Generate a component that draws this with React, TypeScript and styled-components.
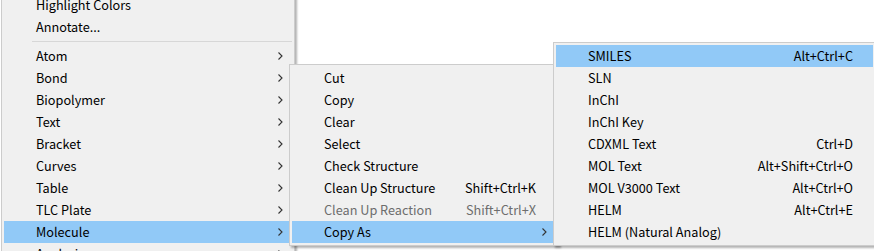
import React from 'react';
import styled, { createGlobalStyle } from 'styled-components';

type Entry =
  | { kind: 'sep' }
  | { kind: 'item'; label: string; shortcut?: string; sub?: boolean; active?: boolean; disabled?: boolean };

const mainItems: Entry[] = [
  { kind: 'item', label: 'Highlight Colors' },
  { kind: 'item', label: 'Annotate...' },
  { kind: 'sep' },
  { kind: 'item', label: 'Atom', sub: true },
  { kind: 'item', label: 'Bond', sub: true },
  { kind: 'item', label: 'Biopolymer', sub: true },
  { kind: 'item', label: 'Text', sub: true },
  { kind: 'item', label: 'Bracket', sub: true },
  { kind: 'item', label: 'Curves', sub: true },
  { kind: 'item', label: 'Table', sub: true },
  { kind: 'item', label: 'TLC Plate', sub: true },
  { kind: 'item', label: 'Molecule', sub: true, active: true },
  { kind: 'item', label: 'Analysis', sub: true },
];

const moleculeItems: Entry[] = [
  { kind: 'item', label: 'Cut' },
  { kind: 'item', label: 'Copy' },
  { kind: 'item', label: 'Clear' },
  { kind: 'item', label: 'Select' },
  { kind: 'item', label: 'Check Structure' },
  { kind: 'item', label: 'Clean Up Structure', shortcut: 'Shift+Ctrl+K' },
  { kind: 'item', label: 'Clean Up Reaction', shortcut: 'Shift+Ctrl+X', disabled: true },
  { kind: 'item', label: 'Copy As', sub: true, active: true },
];

const copyAsItems: Entry[] = [
  { kind: 'item', label: 'SMILES', shortcut: 'Alt+Ctrl+C', active: true },
  { kind: 'item', label: 'SLN' },
  { kind: 'item', label: 'InChI' },
  { kind: 'item', label: 'InChI Key' },
  { kind: 'item', label: 'CDXML Text', shortcut: 'Ctrl+D' },
  { kind: 'item', label: 'MOL Text', shortcut: 'Alt+Shift+Ctrl+O' },
  { kind: 'item', label: 'MOL V3000 Text', shortcut: 'Alt+Ctrl+O' },
  { kind: 'item', label: 'HELM', shortcut: 'Alt+Ctrl+E' },
  { kind: 'item', label: 'HELM (Natural Analog)' },
];

const Chevron = () => (
  <svg width="5" height="8" viewBox="0 0 5 8">
    <polyline points="0.5,0.5 4,4 0.5,7.5" fill="none" stroke="#333" strokeWidth="1.1" />
  </svg>
);

const MenuList: React.FC<{ items: Entry[] }> = ({ items }) => (
  <>
    {items.map((it, i) =>
      it.kind === 'sep' ? (
        <Separator key={i} />
      ) : (
        <Item key={i} $active={it.active} $disabled={it.disabled}>
          <Label>{it.label}</Label>
          {it.shortcut && <Shortcut>{it.shortcut}</Shortcut>}
          <ArrowSlot>{it.sub && <Chevron />}</ArrowSlot>
        </Item>
      )
    )}
  </>
);

const App: React.FC = () => (
  <>
    <GlobalStyle />
    <Desk>
      <Menu $left={1} $top={-9} $width={294}>
        <MenuList items={mainItems} />
      </Menu>
      <Menu $left={289} $top={64} $width={270}>
        <MenuList items={moleculeItems} />
      </Menu>
      <Menu $left={553} $top={42} $width={323}>
        <MenuList items={copyAsItems} />
      </Menu>
    </Desk>
  </>
);

export default App;

const GlobalStyle = createGlobalStyle`
  html, body {
    margin: 0;
    padding: 0;
    background: #ffffff;
    overflow: hidden;
  }
  body {
    font-family: "Noto Sans CJK SC", "Noto Sans", sans-serif;
    font-size: 12.7px;
  }
`;

const Desk = styled.div`
  position: relative;
  width: 874px;
  height: 251px;
  overflow: hidden;
  background: #ffffff;
`;

// cascading popups sit over each other, so they are placed on the desk
const Menu = styled.div<{ $left: number; $top: number; $width: number }>`
  position: absolute;
  left: ${(p) => p.$left}px;
  top: ${(p) => p.$top}px;
  width: ${(p) => p.$width}px;
  box-sizing: border-box;
  display: flex;
  flex-direction: column;
  padding: 2px;
  background: #f0f0f0;
  border: 1px solid #cccccc;
  box-shadow: 2px 2px 2px rgba(0, 0, 0, 0.3);
`;

const Item = styled.div<{ $active?: boolean; $disabled?: boolean }>`
  box-sizing: border-box;
  height: 22px;
  display: flex;
  align-items: center;
  padding: 0 4px 2px 32px;
  background: ${(p) => (p.$active ? '#91c9f7' : 'transparent')};
  color: ${(p) => (p.$disabled ? '#6d6d6d' : '#000000')};
  white-space: nowrap;
`;

const Label = styled.span`
  flex: 1;
`;

const Shortcut = styled.span`
  text-align: right;
`;

const ArrowSlot = styled.span`
  width: 16px;
  align-self: stretch;
  display: flex;
  align-items: center;
  justify-content: center;
  margin-bottom: -2px;
`;

const Separator = styled.div`
  height: 7px;
  display: flex;
  align-items: center;
  padding-left: 28px;
  &::after {
    content: '';
    flex: 1;
    height: 1px;
    background: #d7d7d7;
  }
`;
